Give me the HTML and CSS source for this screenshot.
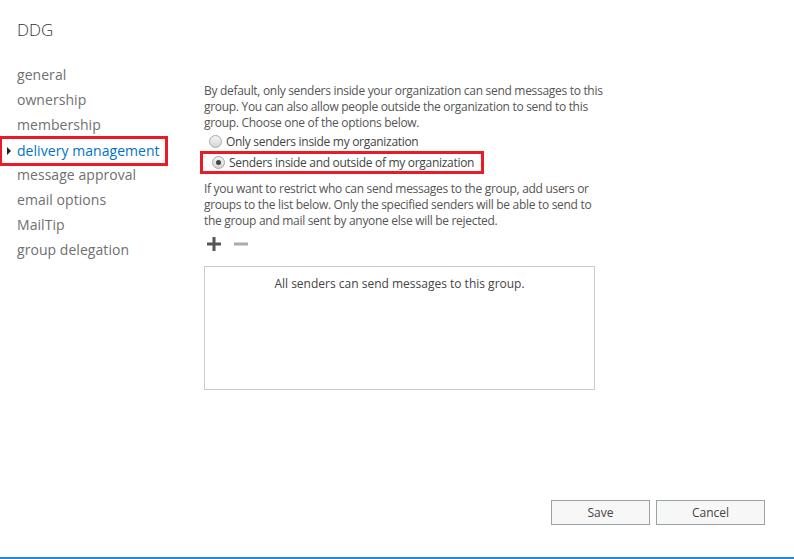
FILE: index.html
```html
<!DOCTYPE html>
<html lang="en">
<head>
    <meta charset="UTF-8">
    <title>DDG</title>
    <link rel="stylesheet" href="styles.css">
</head>
<body>
    <div class="page">
        <h1 class="title">DDG</h1>
        <div class="main">
            <ul class="nav">
                <li>general</li>
                <li>ownership</li>
                <li>membership</li>
                <li class="active"><span class="arrow"></span>delivery management</li>
                <li>message approval</li>
                <li>email options</li>
                <li>MailTip</li>
                <li>group delegation</li>
            </ul>
            <div class="content">
                <p class="text">By default, only senders inside your organization can send messages to this group. You can also allow people outside the organization to send to this group. Choose one of the options below.</p>
                <label class="option"><span class="radio"></span>Only senders inside my organization</label>
                <label class="option picked"><span class="radio on"></span>Senders inside and outside of my organization</label>
                <p class="text">If you want to restrict who can send messages to the group, add users or groups to the list below. Only the specified senders will be able to send to the group and mail sent by anyone else will be rejected.</p>
                <div class="tools">
                    <svg width="16" height="16" viewBox="0 0 16 16"><path d="M6.5 1h3v5.5H15v3H9.5V15h-3V9.5H1v-3h5.5z" fill="#555"/></svg>
                    <svg width="16" height="16" viewBox="0 0 16 16"><rect x="1" y="6.5" width="14" height="3" fill="#a7adad"/></svg>
                </div>
                <div class="list">All senders can send messages to this group.</div>
            </div>
        </div>
        <div class="buttons">
            <button>Save</button>
            <button class="cancel">Cancel</button>
        </div>
    </div>
</body>
</html>
```

FILE: styles.css
```css
html, body {
    margin: 0;
    height: 100%;
}

body {
    font-family: 'Open Sans', 'Liberation Sans', sans-serif;
    background: white;
    color: #333;
    border-bottom: 2px solid #2b88d8;
    box-sizing: border-box;
}

.page {
    height: 100%;
    display: flex;
    flex-direction: column;
}

.title {
    font-weight: 300;
    font-size: 17px;
    color: #333;
    margin: 19px 0 0 17px;
    line-height: 22px;
}

.main {
    display: flex;
    margin-top: 21px;
    flex: 1;
}

.nav {
    list-style: none;
    margin: 0;
    padding: 0;
    width: 204px;
    font-size: 14px;
    letter-spacing: 0.05px;
    color: #707070;
}

.nav li {
    height: 25px;
    line-height: 25px;
    padding-left: 17px;
}

.nav li.active {
    color: #0072c6;
    position: relative;
    width: 148px;
    margin-top: -1px;
    height: 24px;
    line-height: 23px;
    border: 3px solid #ea1a26;
    border-left-width: 2px;
    padding-left: 15px;
    margin-bottom: -4px;
}

.arrow {
    position: absolute;
    left: 5px;
    top: 8px;
    border-left: 4px solid #222;
    border-top: 4px solid transparent;
    border-bottom: 4px solid transparent;
}

.content {
    padding-top: 21px;
    width: 404px;
    font-size: 12px;
    color: #555;
}

.text {
    margin: 0;
    line-height: 16px;
    letter-spacing: -0.3px;
}

.option {
    display: flex;
    align-items: center;
    height: 20px;
    letter-spacing: -0.3px;
    color: #444;
}

.option.picked {
    width: 274px;
    height: 17px;
    border: 3px solid #ea1a26;
    margin-left: -4px;
    padding-left: 4px;
    margin-bottom: 7px;
}

.radio {
    width: 11px;
    height: 11px;
    border: 1px solid #a8a8a8;
    border-radius: 50%;
    background: linear-gradient(#f4f4f4, #d6d6d6);
    margin-right: 4px;
    margin-left: 5px;
    position: relative;
}

.radio.on::after {
    content: "";
    position: absolute;
    left: 3px;
    top: 3px;
    width: 5px;
    height: 5px;
    border-radius: 50%;
    background: #444;
}

.tools {
    display: flex;
    gap: 11px;
    margin: 7px 0 0 2px;
    height: 16px;
}

.list {
    margin-top: 14px;
    width: 391px;
    border: 1px solid #c6cdd2;
    text-align: center;
    padding-top: 8px;
    box-sizing: border-box;
    height: 124px;
    color: #444;
}

.buttons {
    display: flex;
    justify-content: flex-end;
    gap: 6px;
    padding-right: 29px;
    margin-bottom: 32px;
}

button {
    font-family: inherit;
    font-size: 12px;
    width: 99px;
    height: 25px;
    background: #f7f7f7;
    border: 1px solid #9aa3a6;
    color: #444;
    padding: 0;
}

button.cancel {
    width: 109px;
}
```
